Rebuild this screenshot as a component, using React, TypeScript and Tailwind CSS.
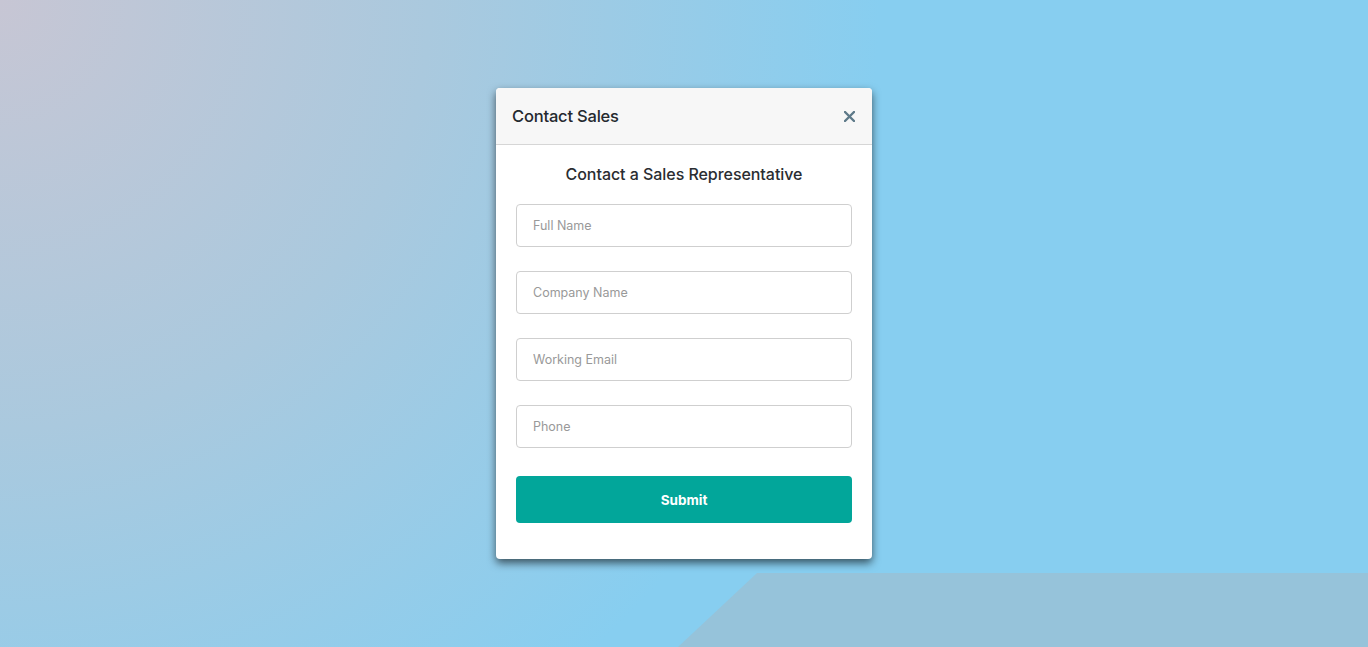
import React from "react";

const fields = ["Full Name", "Company Name", "Working Email", "Phone"];

export default function App() {
  return (
    <div
      className="relative flex h-[647px] w-full items-center justify-center overflow-hidden bg-[radial-gradient(circle_at_0_0,#c7c6d4_0px,#aac9de_430px,#87cef0_880px)]"
      style={{ fontFamily: "Inter, 'Noto Sans', sans-serif" }}
    >
      {/* decorative slab along the bottom edge */}
      <svg
        className="pointer-events-none absolute bottom-0 left-0"
        width="1368"
        height="74"
        viewBox="0 0 1368 74"
      >
        <polygon points="757,0 1368,0 1368,74 678,74" fill="#96c3da" />
      </svg>

      <div className="relative w-[376px] overflow-hidden rounded-[4px] bg-white shadow-[0_4px_8px_rgba(0,0,0,0.6)]">
        <div className="flex h-[57px] items-center justify-between border-b border-[#d6d6d6] bg-[#f7f7f7] pl-4 pr-[15px]">
          <h2 className="text-[16.5px] font-medium tracking-[-0.2px] text-[#24292e]">Contact Sales</h2>
          <button className="flex h-4 w-4 items-center justify-center" aria-label="Close">
            <svg width="11" height="11" viewBox="0 0 11 11">
              <path d="M1 1 L10 10 M10 1 L1 10" stroke="#5e7a89" strokeWidth="2.4" strokeLinecap="round" />
            </svg>
          </button>
        </div>

        <div className="px-5 pb-9 pt-[17px]">
          <h3 className="mb-[18px] text-center text-[16px] font-medium leading-6 tracking-[-0.05px] text-[#2a2d31]">
            Contact a Sales Representative
          </h3>
          <form className="flex flex-col">
            {fields.map((f) => (
              <input
                key={f}
                type="text"
                placeholder={f}
                className="mb-6 h-[43px] w-full rounded-[4px] border border-[#cfcfcf] px-4 text-[12.5px] text-[#333] outline-none placeholder:text-[#999]"
              />
            ))}
            <button
              type="button"
              className="mt-1 h-[47px] w-full rounded-[4px] bg-[#02a69a] pt-[2px] text-[13.5px] font-bold text-white"
            >
              Submit
            </button>
          </form>
        </div>
      </div>
    </div>
  );
}
